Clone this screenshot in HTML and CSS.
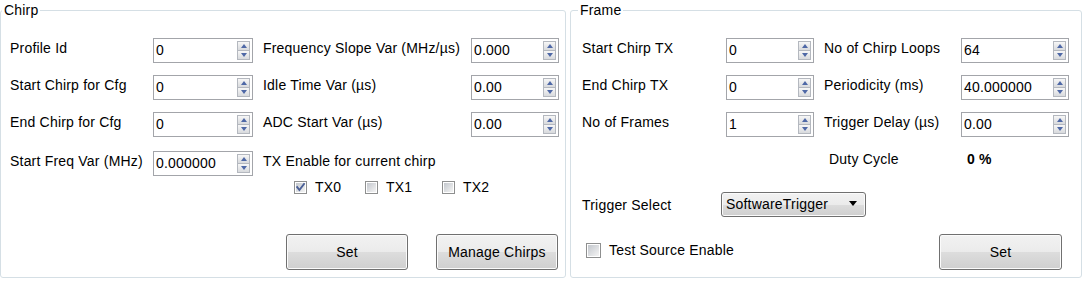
FILE: index.html
```html
<!DOCTYPE html>
<html>
<head>
<meta charset="utf-8">
<link rel="stylesheet" href="styles.css">
</head>
<body>
<div class="panel">
  <fieldset class="group chirp">
    <legend>Chirp</legend>
    <div class="grid chirp-grid">
      <div class="lbl">Profile Id</div>
      <div class="num"><span class="val">0</span><div class="spin"><div class="up"></div><div class="dn"></div></div></div>
      <div class="lbl lbl2">Frequency Slope Var (MHz/µs)</div>
      <div class="num"><span class="val">0.000</span><div class="spin"><div class="up"></div><div class="dn"></div></div></div>

      <div class="lbl">Start Chirp for Cfg</div>
      <div class="num"><span class="val">0</span><div class="spin"><div class="up"></div><div class="dn"></div></div></div>
      <div class="lbl lbl2">Idle Time Var (µs)</div>
      <div class="num"><span class="val">0.00</span><div class="spin"><div class="up"></div><div class="dn"></div></div></div>

      <div class="lbl">End Chirp for Cfg</div>
      <div class="num"><span class="val">0</span><div class="spin"><div class="up"></div><div class="dn"></div></div></div>
      <div class="lbl lbl2">ADC Start Var (µs)</div>
      <div class="num"><span class="val">0.00</span><div class="spin"><div class="up"></div><div class="dn"></div></div></div>

      <div class="lbl">Start Freq Var (MHz)</div>
      <div class="num"><span class="val">0.000000</span><div class="spin"><div class="up"></div><div class="dn"></div></div></div>
      <div class="lbl lbl2 span2">TX Enable for current chirp</div>

      <div class="checks">
        <div class="chk w71"><span class="cb"><svg width="13" height="13" viewBox="0 0 13 13"><path d="M3.2 6.2 L5.4 9 L10 3" fill="none" stroke="#4a5f97" stroke-width="1.9" stroke-linecap="square"/></svg></span><span>TX0</span></div>
        <div class="chk w77"><span class="cb"></span><span>TX1</span></div>
        <div class="chk"><span class="cb"></span><span>TX2</span></div>
      </div>
    </div>
    <div class="actions chirp-actions">
      <button class="btn">Set</button>
      <button class="btn">Manage Chirps</button>
    </div>
  </fieldset>

  <fieldset class="group frame">
    <legend>Frame</legend>
    <div class="grid frame-grid">
      <div class="lbl">Start Chirp TX</div>
      <div class="num"><span class="val">0</span><div class="spin"><div class="up"></div><div class="dn"></div></div></div>
      <div class="lbl lbl2">No of Chirp Loops</div>
      <div class="num"><span class="val">64</span><div class="spin"><div class="up"></div><div class="dn"></div></div></div>

      <div class="lbl">End Chirp TX</div>
      <div class="num"><span class="val">0</span><div class="spin"><div class="up"></div><div class="dn"></div></div></div>
      <div class="lbl lbl2">Periodicity (ms)</div>
      <div class="num"><span class="val">40.000000</span><div class="spin"><div class="up"></div><div class="dn"></div></div></div>

      <div class="lbl">No of Frames</div>
      <div class="num"><span class="val">1</span><div class="spin"><div class="up"></div><div class="dn"></div></div></div>
      <div class="lbl lbl2">Trigger Delay (µs)</div>
      <div class="num"><span class="val">0.00</span><div class="spin"><div class="up"></div><div class="dn"></div></div></div>

      <div class="lbl duty-lbl">Duty Cycle</div>
      <div class="lbl duty-val">0 %</div>
    </div>
    <div class="trigger-row">
      <div class="trig-lbl">Trigger Select</div>
      <div class="combo"><span>SoftwareTrigger</span><span class="arrow"></span></div>
    </div>
    <div class="actions frame-actions">
      <div class="chk test-chk"><span class="cb cb-lg"></span><span>Test Source Enable</span></div>
      <button class="btn btn-wide">Set</button>
    </div>
  </fieldset>
</div>
</body>
</html>
```
FILE: styles.css
```css
html, body {
  margin: 0;
  background: #fff;
}
body {
  font-family: "Liberation Sans", Arial, sans-serif;
  font-size: 14px;
  letter-spacing: 0.2px;
  color: #000;
}
.panel {
  display: flex;
  gap: 4px;
  padding-top: 2px;
}
.group {
  margin: 0;
  padding: 0;
  min-width: 0;
  border: 1px solid #d5dfe5;
  border-radius: 3px;
  height: 276px;
  box-sizing: border-box;
  display: flex;
  flex-direction: column;
}
.chirp { width: 566px; }
.frame { width: 512px; }
.group legend {
  padding: 0 2px;
  line-height: 16px;
  margin-left: 1px;
}
.frame legend { margin-left: 7px; }

.grid {
  display: grid;
  align-items: end;
  margin-top: 8px;
}
.chirp-grid {
  grid-template-columns: 143px 100px 218px 88px;
  grid-template-rows: 37px 37px 37px 39px 20px;
  padding-left: 9px;
}
.frame-grid {
  grid-template-columns: 144px 88px 147px 108px;
  grid-template-rows: 37px 37px 37px 30px;
  padding-left: 11px;
}
.lbl {
  line-height: 16px;
  padding-bottom: 7px;
  white-space: nowrap;
}
.lbl2 { padding-left: 10px; }
.span2 { grid-column: 3 / 5; }
.duty-lbl {
  grid-column: 3;
  padding-left: 15px;
  padding-bottom: 0;
}
.duty-val {
  grid-column: 4;
  padding-left: 6px;
  padding-bottom: 0;
  font-weight: bold;
}

.num {
  height: 25px;
  box-sizing: border-box;
  border: 1px solid #a3a5aa;
  background: #fff;
  display: flex;
}
.num .val {
  flex: 1;
  padding-left: 2px;
  line-height: 23px;
  white-space: nowrap;
}
.spin {
  width: 13px;
  margin: 2px 2px 2px 0;
  display: flex;
  flex-direction: column;
}
.spin .up, .spin .dn {
  flex: 1;
  box-sizing: border-box;
  border: 1px solid #b4b8bf;
  background: linear-gradient(#f7f7f7, #d8dadd);
  display: flex;
  align-items: center;
  justify-content: center;
}
.spin .dn { border-top: none; }
.spin .up::after {
  content: "";
  border-left: 3.5px solid transparent;
  border-right: 3.5px solid transparent;
  border-bottom: 4px solid #4e68a6;
}
.spin .dn::after {
  content: "";
  border-left: 3.5px solid transparent;
  border-right: 3.5px solid transparent;
  border-top: 4px solid #4e68a6;
}

.checks {
  grid-column: 3 / 5;
  align-self: start;
  padding: 3px 0 0 41px;
  display: flex;
}
.chk {
  display: flex;
  align-items: center;
  gap: 8px;
  line-height: 16px;
  white-space: nowrap;
}
.w71 { width: 71px; }
.w77 { width: 77px; }
.cb {
  width: 13px;
  height: 13px;
  box-sizing: border-box;
  border: 1px solid #8e8f8f;
  padding: 1px;
  background: linear-gradient(135deg, #c3c7cd, #f4f4f4) content-box, #fff;
  flex: none;
}
.cb-lg {
  width: 15px;
  height: 15px;
}
.cb svg {
  display: block;
  margin: -2px;
}

.actions {
  margin-top: auto;
  display: flex;
  align-items: center;
}
.chirp-actions {
  justify-content: flex-end;
  gap: 28px;
  padding: 0 7px 7px 0;
}
.frame-actions {
  justify-content: space-between;
  padding: 0 19px 7px 15px;
}
.test-chk {
  gap: 8px;
  padding-bottom: 4px;
}
.btn {
  width: 122px;
  height: 36px;
  box-sizing: border-box;
  border: 1px solid #707070;
  border-radius: 3px;
  background: linear-gradient(#f2f2f2 0%, #ebebeb 50%, #dddddd 50%, #cfcfcf 100%);
  box-shadow: inset 0 0 0 1px #fbfbfb;
  font: inherit;
  letter-spacing: inherit;
  color: #000;
  padding: 0;
}
.btn-wide { width: 123px; }

.trigger-row {
  display: flex;
  align-items: center;
  margin-top: 25px;
  padding-left: 11px;
}
.trig-lbl {
  width: 139px;
  line-height: 16px;
}
.combo {
  width: 145px;
  height: 25px;
  box-sizing: border-box;
  border: 1px solid #707070;
  border-radius: 3px;
  background: linear-gradient(#f2f2f2 0%, #ebebeb 50%, #dddddd 50%, #cfcfcf 100%);
  box-shadow: inset 0 0 0 1px #fbfbfb;
  display: flex;
  align-items: center;
  justify-content: space-between;
  padding: 0 8px 2px 4px;
  line-height: 16px;
  white-space: nowrap;
}
.combo .arrow {
  width: 0;
  height: 0;
  border-left: 4px solid transparent;
  border-right: 4px solid transparent;
  border-top: 5px solid #000;
}
```
